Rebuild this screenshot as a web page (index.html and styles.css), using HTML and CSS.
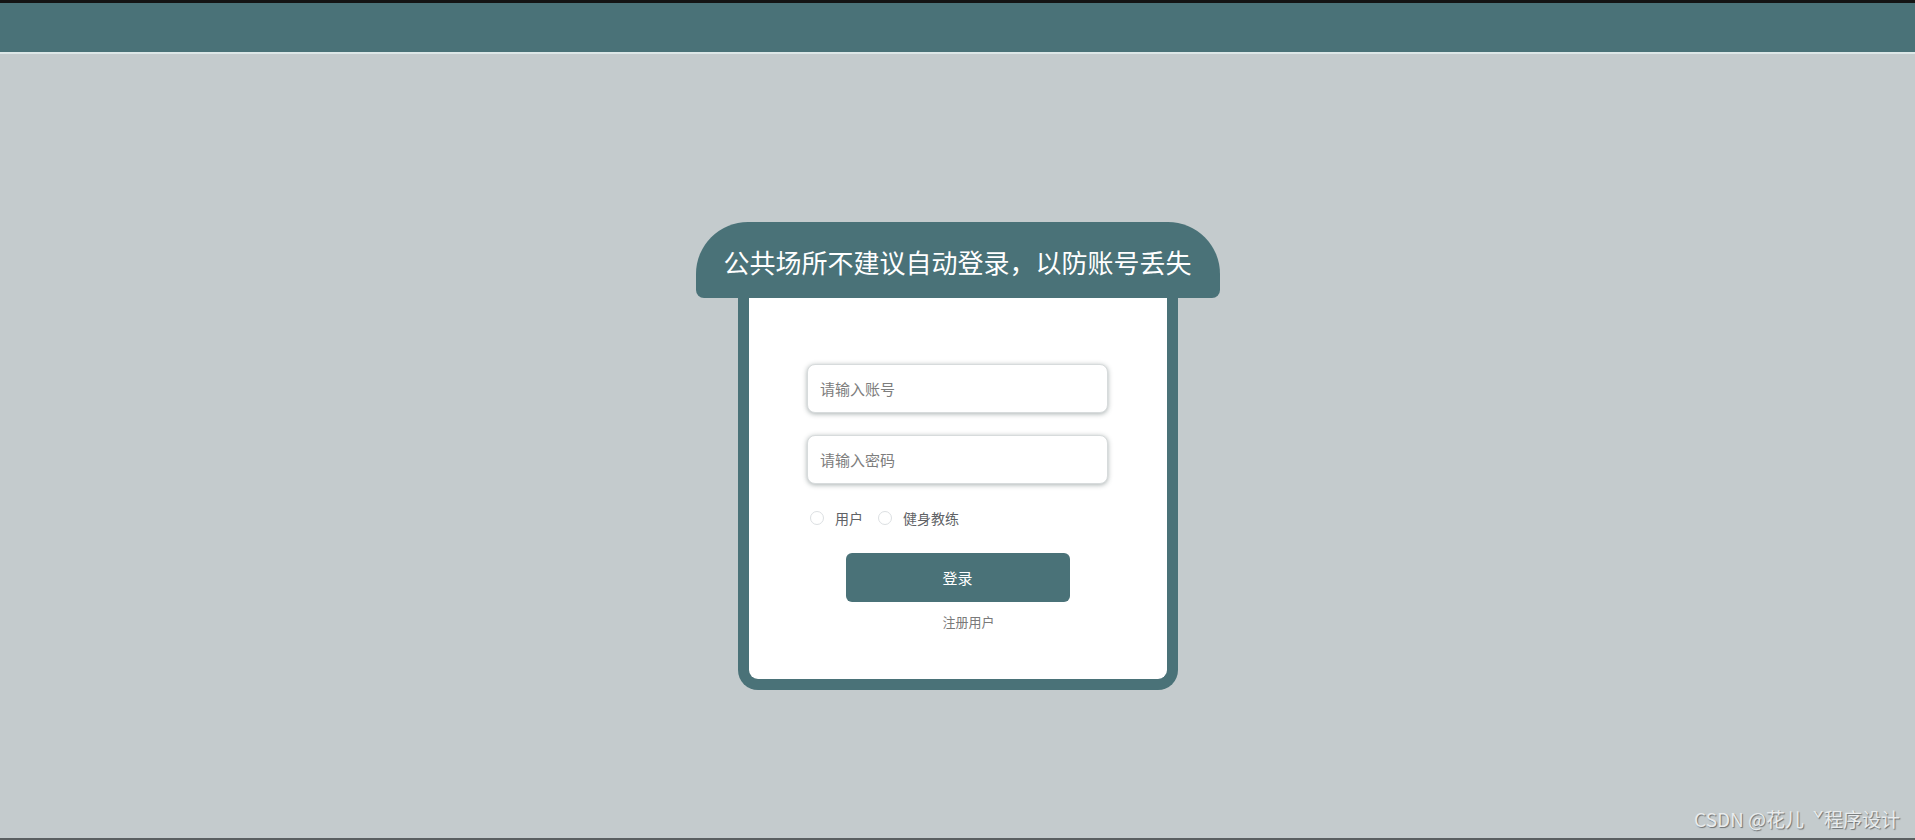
FILE: index.html
```html
<!DOCTYPE html>
<html lang="zh-CN">

<head>
    <meta charset="UTF-8">
    <meta name="viewport" content="width=device-width, initial-scale=1.0">
    <title>登录</title>
    <link rel="stylesheet" href="styles.css">
</head>

<body>
    <div class="topbar"></div>
    <div class="main">
        <div class="login">
            <div class="tip">公共场所不建议自动登录，以防账号丢失</div>
            <div class="box">
                <input class="field" type="text" placeholder="请输入账号">
                <input class="field" type="password" placeholder="请输入密码">
                <div class="roles">
                    <label class="role"><span class="radio"></span>用户</label>
                    <label class="role"><span class="radio"></span>健身教练</label>
                </div>
                <button class="btn">登录</button>
                <a class="reg">注册用户</a>
            </div>
        </div>
    </div>
    <div class="mark">CSDN @花儿&nbsp;&nbsp;ˇ程序设计</div>
</body>

</html>
```

FILE: styles.css
```css
* {
    box-sizing: border-box;
}

body {
    margin: 0;
    height: 840px;
    background-color: #c4cbcd;
    border-bottom: 2px solid #5a5f61;
    display: flex;
    flex-direction: column;
    font-family: "Noto Sans CJK SC", "Liberation Sans", sans-serif;
    overflow: hidden;
    position: relative;
}

.topbar {
    height: 54px;
    background-color: #4a7278;
    border-top: 3px solid #141414;
    border-bottom: 2px solid #dde7e7;
}

.main {
    flex: 1;
    display: flex;
    justify-content: center;
    padding-top: 168px;
}

.login {
    width: 524px;
}

.tip {
    position: relative;
    z-index: 1;
    height: 76px;
    padding-top: 2px;
    background-color: #4a7278;
    border-radius: 52px 52px 8px 8px;
    color: #fff;
    font-size: 26px;
    display: flex;
    align-items: center;
    justify-content: center;
}

.box {
    width: 440px;
    margin: 0 auto;
    background-color: #fff;
    border: 11px solid #4a7278;
    border-top: 0;
    border-radius: 0 0 20px 20px;
    padding: 66px 0 48px;
    display: flex;
    flex-direction: column;
    align-items: center;
}

.field {
    width: 301px;
    height: 49px;
    border: 1px solid #d7dbdc;
    border-radius: 8px;
    padding: 0 12px;
    font-size: 15px;
    font-family: inherit;
    box-shadow: 0 1px 5px rgba(40, 60, 60, 0.4);
    outline: none;
    margin-bottom: 22px;
}

.field::placeholder {
    color: #7d7d7d;
}

.roles {
    width: 301px;
    display: flex;
    align-items: center;
    height: 20px;
    margin-top: 2px;
    font-size: 14px;
    color: #606266;
}

.role {
    display: flex;
    align-items: center;
    margin-right: 15px;
}

.radio {
    width: 14px;
    height: 14px;
    border: 1px solid #dcdfe2;
    border-radius: 50%;
    margin: 0 11px 0 3px;
    background-color: #fff;
}

.role + .role .radio {
    margin-left: 0;
}

.btn {
    width: 224px;
    height: 49px;
    margin-top: 25px;
    background-color: #4a7278;
    color: #fff;
    border: none;
    border-radius: 6px;
    font-size: 15px;
    font-family: inherit;
    cursor: pointer;
}

.reg {
    margin-top: 11px;
    margin-left: 22px;
    font-size: 13px;
    line-height: 18px;
    color: #7a7a7a;
    cursor: pointer;
}

.mark {
    position: absolute;
    right: 15px;
    bottom: 6px;
    font-size: 19px;
    color: #e9eced;
    text-shadow: 1px 1px 1px rgba(0, 0, 0, 0.45);
}
```
